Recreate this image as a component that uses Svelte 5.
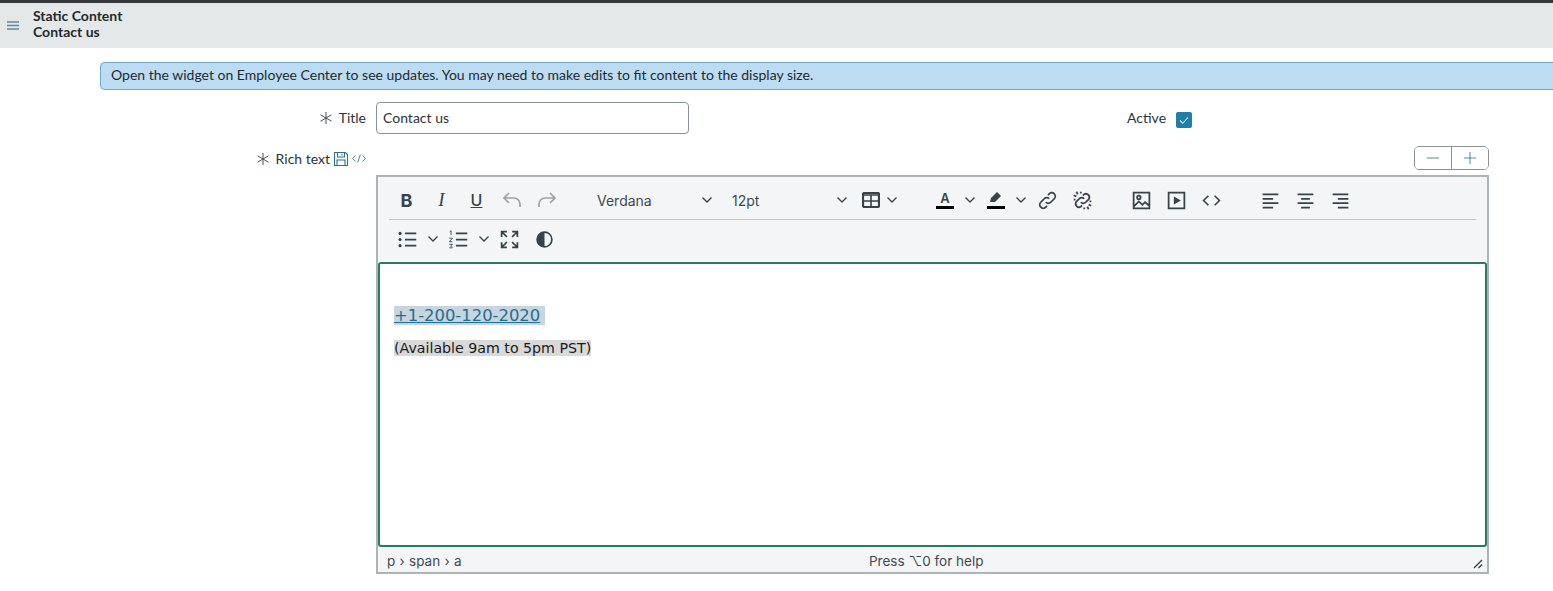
<script>
	// stroke paths for the editor toolbar, 24x24 box
	const icons = {
		undo: 'M9 5 4 10l5 5M4 10h10a6 6 0 0 1 6 6v3',
		redo: 'M15 5l5 5-5 5M20 10H10a6 6 0 0 0-6 6v3',
		link: 'M10 14a4 4 0 0 0 5.7 0l4-4a4 4 0 0 0-5.7-5.7l-1.5 1.5M14 10a4 4 0 0 0-5.7 0l-4 4A4 4 0 0 0 10 19.7l1.5-1.5',
		unlink: 'M10 14a4 4 0 0 0 5.7 0l3.5-3.5a4 4 0 0 0-5.2-5.7l-1.5 1.5M14 10a4 4 0 0 0-5.7 0l-3.5 3.5a4 4 0 0 0 5.2 5.7l1.5-1.5M5 2l1.5 3M2 6l3 1.5M19 22l-1.5-3M22 18l-3-1.5M10 2v2M2 11h2M14 22v-2M22 13h-2',
		image: 'M3 3h18v18H3zM3 19l6-6 4 4 3-3 5 4',
		play: 'M3 3h18v18H3z',
		code: 'M8 6l-6 6 6 6M16 6l6 6-6 6',
		left: 'M3 5h18M3 10h12M3 15h18M3 20h12',
		center: 'M3 5h18M7 10h10M3 15h18M7 20h10',
		right: 'M3 5h18M9 10h12M3 15h18M9 20h12',
		bullets: 'M9 5h13M9 12h13M9 19h13',
		numbers: 'M9 5h13M9 12h13M9 19h13',
		full: 'M3 9V3h6M15 3h6v6M21 15v6h-6M9 21H3v-6M4 4l5 5M20 4l-5 5M20 20l-5-5M4 20l5-5'
	};
</script>

{#snippet icon(name, cls = '')}
	<svg class="ic {cls}" viewBox="0 0 24 24" aria-hidden="true">
		<path d={icons[name]} />
		{#if name === 'image'}
			<circle cx="9" cy="8.5" r="2" />
		{:else if name === 'play'}
			<path class="solid" d="M9 7.5v9l8-4.5z" />
		{:else if name === 'bullets'}
			<circle class="solid" cx="3.5" cy="5" r="1.8" />
			<circle class="solid" cx="3.5" cy="12" r="1.8" />
			<circle class="solid" cx="3.5" cy="19" r="1.8" />
		{:else if name === 'numbers'}
			<path class="thin" d="M2 3l1.5-1v5M1.5 10.5h3.5l-3.5 4h3.5M1.5 17.5H5l-2 2 2 2H1.5" />
		{/if}
	</svg>
{/snippet}

{#snippet chevron()}
	<svg class="chev" viewBox="0 0 10 6" aria-hidden="true"><path d="M0.5 0.5 5 5l4.5-4.5" /></svg>
{/snippet}

{#snippet star()}
	<svg class="req" viewBox="0 0 14 14" aria-hidden="true"><path d="M7 1v12M1.5 3.8l11 6.4M12.5 3.8l-11 6.4" /></svg>
{/snippet}

<div class="page">
	<header class="head">
		<svg class="menu" viewBox="0 0 12 9" aria-hidden="true"><path d="M0 1h12M0 4.5h12M0 8h12" /></svg>
		<div class="crumbs">
			<div>Static Content</div>
			<div>Contact us</div>
		</div>
	</header>

	<div class="notice">Open the widget on Employee Center to see updates. You may need to make edits to fit content to the display size.</div>

	<div class="row title-row">
		<div class="label">{@render star()} <span class="nudge">Title</span></div>
		<input class="text" value="Contact us" />
		<div class="active">
			<span class="nudge">Active</span>
			<span class="check">
				<svg viewBox="0 0 16 16" aria-hidden="true"><path d="M4 8.5l2.8 2.8L12 5.5" /></svg>
			</span>
		</div>
	</div>

	<div class="row rich-row">
		<div class="label">
			{@render star()} Rich text
			<svg class="save" viewBox="0 0 16 16" aria-hidden="true"><path d="M1.5 1.5h11l2 2v11h-13zM4.5 1.5v4.5h7V1.5M9 3v1.5M4 14.5V9h8v5.5" /></svg>
			<svg class="source" viewBox="0 0 16 12" aria-hidden="true"><path d="M4 2.5.8 6 4 9.5M12 2.5 15.2 6 12 9.5M9.5 1.5l-3 9" /></svg>
		</div>
		<div class="stepper">
			<button aria-label="Collapse"><svg viewBox="0 0 16 16"><path class="minus" d="M1 8h14" /></svg></button>
			<button aria-label="Expand"><svg viewBox="0 0 16 16"><path d="M1 8h14M8 1v14" /></svg></button>
		</div>
	</div>

	<div class="editor">
		<div class="toolbar">
			<div class="tools first">
				<span class="tb"><b class="g-b">B</b></span>
				<span class="tb"><i class="g-i">I</i></span>
				<span class="tb"><u class="g-u">U</u></span>
				<span class="tb muted">{@render icon('undo', 'big')}</span>
				<span class="tb muted">{@render icon('redo', 'big')}</span>
				<span class="select font">Verdana {@render chevron()}</span>
				<span class="select size">12pt {@render chevron()}</span>
				<span class="split table">
					<svg class="ic" viewBox="0 0 18 16" aria-hidden="true"><rect class="tbl" x="1" y="1" width="16" height="14" rx="1.5" /><path d="M1 3h16M1 9h16M9 3v12" /></svg>
					{@render chevron()}
				</span>
				<span class="split color">
					<span class="g-a">A</span>
					{@render chevron()}
				</span>
				<span class="split marker">
					<span class="pen">
						<svg viewBox="0 0 18 14" aria-hidden="true"><path class="solid" d="M3 11l1-4 6-6 4 4-6 6z" /></svg>
					</span>
					{@render chevron()}
				</span>
				<span class="tb link">{@render icon('link')}</span>
				<span class="tb">{@render icon('unlink')}</span>
				<span class="tb media">{@render icon('image')}</span>
				<span class="tb">{@render icon('play')}</span>
				<span class="tb">{@render icon('code', 'wide')}</span>
				<span class="tb align">{@render icon('left')}</span>
				<span class="tb">{@render icon('center')}</span>
				<span class="tb">{@render icon('right')}</span>
			</div>
			<div class="tools second">
				<span class="tb list">{@render icon('bullets')}{@render chevron()}</span>
				<span class="tb list">{@render icon('numbers')}{@render chevron()}</span>
				<span class="tb">{@render icon('full')}</span>
				<span class="tb">
					<svg class="ic contrast" viewBox="0 0 18 18" aria-hidden="true"><circle cx="9" cy="9" r="7" /><path class="solid" d="M9 2a7 7 0 0 0 0 14z" /></svg>
				</span>
			</div>
		</div>

		<div class="content">
			<p class="phone"><span><a href="#top">+1-200-120-2020</a>&nbsp;</span></p>
			<p class="hours"><span>(Available 9am to 5pm PST)</span></p>
		</div>

		<div class="status">
			<span class="path">p › span › a</span>
			<span class="help">Press ⌥0 for help</span>
			<svg class="grip" viewBox="0 0 10 10" aria-hidden="true"><path d="M1 9 9 1M5.5 9 9 5.5" /></svg>
		</div>
	</div>
</div>

<style>
	:global(body) {
		margin: 0;
		background: #fff;
	}

	.page {
		height: 591px;
		overflow: hidden;
		font-family: Lato, 'Liberation Sans', sans-serif;
		font-size: 14px;
		color: #2a3439;
		border-top: 3px solid #36393b;
		box-sizing: border-box;
	}

	.head {
		display: flex;
		align-items: center;
		height: 45px;
		padding-bottom: 4px;
		box-sizing: border-box;
		background: #e4e8e9;
	}

	.menu {
		width: 12px;
		height: 9px;
		margin: 4px 14px 0 7px;
		stroke: #5f8a9a;
		stroke-width: 1.4;
		fill: none;
	}

	.crumbs {
		font-weight: 700;
		line-height: 16px;
		color: #1f2a2f;
	}

	.notice {
		margin: 14px 0 0 100px;
		height: 28px;
		line-height: 24px;
		padding-left: 10px;
		box-sizing: border-box;
		background: #bddcf2;
		border: 1px solid #6ea6cf;
		border-right: 0;
		border-radius: 5px 0 0 5px;
		color: #1f2a30;
	}

	.row {
		display: flex;
		align-items: center;
	}

	.label {
		width: 366px;
		flex: none;
		display: flex;
		justify-content: flex-end;
		align-items: center;
		gap: 6px;
	}

	.nudge {
		margin-top: -2px;
	}

	.req {
		width: 14px;
		height: 14px;
		fill: none;
		stroke: #4a5257;
		stroke-width: 1;
	}

	.title-row {
		margin-top: 12px;
		height: 32px;
	}

	.text {
		margin-left: 10px;
		width: 313px;
		height: 32px;
		box-sizing: border-box;
		padding: 0 6px 2px;
		border: 1px solid #8a9296;
		border-radius: 4px;
		font: inherit;
		color: #2a3439;
		outline: none;
	}

	.active {
		display: flex;
		align-items: center;
		gap: 10px;
		margin-left: 438px;
	}

	.check {
		display: block;
		width: 16px;
		height: 16px;
		margin-top: 3px;
		border-radius: 2px;
		background: #1f7fa6;
	}

	.check svg {
		display: block;
		fill: none;
		stroke: #d5ecf5;
		stroke-width: 1.1;
	}

	.rich-row {
		margin-top: 12px;
		height: 24px;
		justify-content: space-between;
		width: 1489px;
	}

	.rich-row .label {
		width: 366px;
		gap: 3px;
		margin-top: 1px;
	}

	.rich-row .req {
		margin-right: 3px;
	}

	.save {
		width: 16px;
		height: 16px;
		fill: none;
		stroke: #2f6f86;
		stroke-width: 1.1;
	}

	.source {
		width: 14px;
		height: 11px;
		fill: none;
		stroke: #2f6f86;
		stroke-width: 1;
	}

	.stepper {
		display: flex;
		width: 75px;
		height: 24px;
		box-sizing: border-box;
		border: 1px solid #8a9296;
		border-radius: 5px;
		overflow: hidden;
	}

	.stepper button {
		flex: 1;
		padding: 0;
		border: 0;
		background: #fff;
		display: flex;
		align-items: center;
		justify-content: center;
	}

	.stepper button + button {
		border-left: 1px solid #8a9296;
	}

	.stepper svg {
		width: 14px;
		height: 14px;
		fill: none;
		stroke: #4d8ea6;
		stroke-width: 1.2;
	}

	.stepper .minus {
		stroke: #8fb0bd;
		stroke-width: 1.5;
	}

	.editor {
		margin: 5px 0 0 376px;
		width: 1113px;
		height: 399px;
		box-sizing: border-box;
		border: 2px solid #adb4b6;
		background: #f4f5f7;
		display: flex;
		flex-direction: column;
		font-family: Inter, 'Liberation Sans', sans-serif;
		color: #3a464c;
	}

	.toolbar {
		height: 85px;
		flex: none;
		padding: 0 11px;
	}

	.tools {
		display: flex;
		align-items: center;
		height: 42px;
		margin: 0;
	}

	.first {
		height: 43px;
		padding-top: 4px;
		box-sizing: border-box;
		border-bottom: 1px solid #c2c6c8;
	}

	.second {
		height: 38px;
	}

	.tb {
		display: flex;
		align-items: center;
		justify-content: center;
		width: 35px;
		height: 24px;
		flex: none;
	}

	.muted {
		opacity: 0.45;
	}

	.ic {
		width: 21px;
		height: 21px;
		fill: none;
		stroke: #36434a;
		stroke-width: 2;
		flex: none;
	}

	.ic .solid,
	.solid {
		fill: #36434a;
		stroke: none;
	}

	.ic .thin {
		stroke-width: 1;
	}

	.ic.wide {
		width: 19px;
		height: 19px;
	}

	.ic.big {
		width: 24px;
		height: 24px;
		stroke-width: 1.7;
	}

	.g-b {
		font-size: 18px;
		font-weight: 700;
		color: #36434a;
	}

	.g-i {
		font-family: 'Liberation Serif', serif;
		font-size: 19px;
		color: #36434a;
	}

	.g-u {
		font-size: 16px;
		font-weight: 500;
		color: #36434a;
	}

	.chev {
		width: 10px;
		height: 6px;
		fill: none;
		stroke: #36434a;
		stroke-width: 1.3;
		flex: none;
	}

	.select {
		display: flex;
		align-items: center;
		justify-content: space-between;
		flex: none;
		box-sizing: border-box;
		font-size: 14px;
		color: #3f4a50;
	}

	.font {
		width: 115px;
		margin-left: 33px;
	}

	.size {
		width: 115px;
		margin-left: 20px;
	}

	.split {
		display: flex;
		align-items: center;
		flex: none;
	}

	.table {
		margin-left: 15px;
		gap: 7px;
	}

	.table .ic {
		width: 18px;
		height: 16px;
		stroke-width: 1.6;
	}

	.table .tbl {
		stroke-width: 2.2;
	}

	.color {
		margin-left: 39px;
		gap: 11px;
	}

	.g-a {
		display: block;
		width: 18px;
		text-align: center;
		font-size: 13px;
		font-weight: 600;
		line-height: 15px;
		border-bottom: 3px solid #000;
		color: #36434a;
	}

	.marker {
		margin-left: 12px;
		gap: 11px;
	}

	.pen {
		display: block;
		width: 18px;
		height: 15px;
		border-bottom: 3px solid #000;
	}

	.pen svg {
		display: block;
		width: 18px;
		height: 14px;
	}

	.link {
		margin-left: 3.5px;
	}

	.media {
		margin-left: 24px;
	}

	.align {
		margin-left: 24px;
	}

	.list {
		width: auto;
		gap: 10px;
		margin-right: 10px;
	}

	.list:first-child {
		margin-left: 7.5px;
	}

	.list + .list {
		margin-right: 3.5px;
	}

	.contrast {
		width: 19px;
		height: 19px;
		stroke-width: 1.6;
	}

	.content {
		flex: 1;
		background: #fff;
		border: 2px solid #2c7a62;
		border-radius: 3px;
		padding: 0 14px;
		font-family: 'DejaVu Sans', Verdana, sans-serif;
		color: #1a1a1a;
	}

	.content p {
		margin: 0;
	}

	.phone {
		margin-top: 40px !important;
		font-size: 16.4px;
		line-height: 23px;
	}

	.phone span {
		background: #c8d5df;
	}

	.phone a {
		color: #1f6f92;
	}

	.hours {
		margin-top: 11px !important;
		font-size: 14.2px;
		line-height: 20px;
	}

	.hours span {
		background: #d9d9d9;
	}

	.status {
		position: relative;
		height: 25px;
		padding: 2px 9px 0;
		box-sizing: border-box;
		flex: none;
		display: flex;
		align-items: center;
		font-size: 13.5px;
		color: #3f4a50;
	}

	.path {
		word-spacing: 0.5px;
	}

	.help {
		position: absolute;
		left: 491px;
	}

	.grip {
		position: absolute;
		right: 4px;
		bottom: 3px;
		width: 10px;
		height: 10px;
		fill: none;
		stroke: #36434a;
		stroke-width: 1.3;
	}
</style>
